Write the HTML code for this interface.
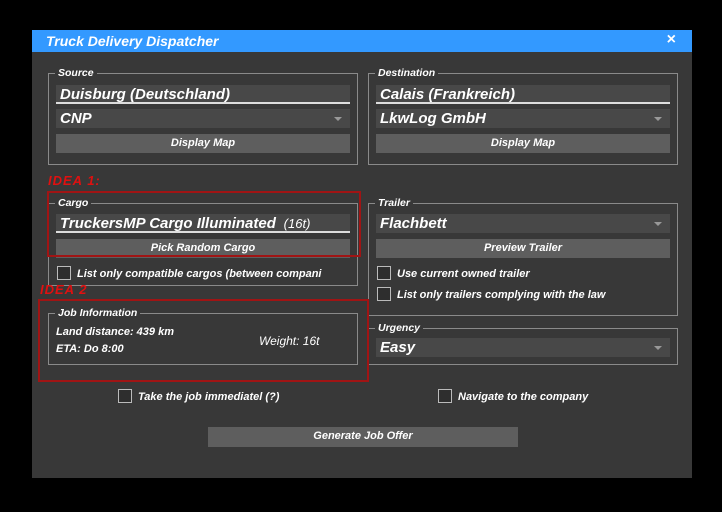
<!DOCTYPE html><html><head><style>
body{margin:0;background:#000;width:722px;height:512px;position:relative;overflow:hidden;font-family:"Liberation Sans",sans-serif;font-style:italic;font-weight:bold;color:#fff}
div{position:absolute;box-sizing:border-box}
.win{left:32px;top:30px;width:660px;height:448px;background:#383838}
.title{left:32px;top:30px;width:660px;height:22px;background:#3399ff;font-size:14px;padding:3px 0 0 14px}
.fs{border:1px solid #8a8a8a}
.lg{background:#383838;font-size:10.5px;padding:0 3px;top:-7px;left:6px;line-height:12px}
.inp{background:#484848;font-size:15px;padding:0 0 0 4px;height:19px;line-height:19px}
.ul{border-bottom:2px solid #ddd}
.btn{background:#5e5e5e;font-size:11px;text-align:center;line-height:19px;height:19px}
.arr{right:8px;top:8px;width:0;height:0;border-left:4px solid transparent;border-right:4px solid transparent;border-top:4px solid #999}
.cb{width:14px;height:14px;border:1px solid #bbb;background:#2e2e2e}
.t{font-size:11px;white-space:nowrap}
.red{border:2px solid #a01414;z-index:5}
.rt{color:#e01010;font-size:13px;letter-spacing:1px}
</style></head><body>
<div class="win"></div>
<div class="title">Truck Delivery Dispatcher<span style="position:absolute;right:16px;top:1px;font-size:16px;font-style:normal">×</span></div>

<div class="fs" style="left:48px;top:73px;width:310px;height:92px"><div class="lg">Source</div></div>
<div class="inp ul" style="left:56px;top:85px;width:294px;height:19px">Duisburg (Deutschland)</div>
<div class="inp" style="left:56px;top:109px;width:294px">CNP<div class="arr"></div></div>
<div class="btn" style="left:56px;top:134px;width:294px">Display Map</div>

<div class="fs" style="left:368px;top:73px;width:310px;height:92px"><div class="lg">Destination</div></div>
<div class="inp ul" style="left:376px;top:85px;width:294px">Calais (Frankreich)</div>
<div class="inp" style="left:376px;top:109px;width:294px">LkwLog GmbH<div class="arr"></div></div>
<div class="btn" style="left:376px;top:134px;width:294px">Display Map</div>

<div class="rt" style="left:48px;top:173px">IDEA 1:</div>
<div class="fs" style="left:48px;top:203px;width:310px;height:83px"><div class="lg">Cargo</div></div>
<div class="inp ul" style="left:56px;top:214px;width:294px">TruckersMP Cargo Illuminated <span style="font-weight:normal;font-size:13px">&nbsp;(16t)</span></div>
<div class="btn" style="left:56px;top:239px;width:294px">Pick Random Cargo</div>
<div class="cb" style="left:57px;top:266px"></div>
<div class="t" style="left:77px;top:268px">List only compatible cargos (between compani</div>
<div class="red" style="left:47px;top:191px;width:314px;height:66px"></div>

<div class="fs" style="left:368px;top:203px;width:310px;height:113px"><div class="lg">Trailer</div></div>
<div class="inp" style="left:376px;top:214px;width:294px">Flachbett<div class="arr"></div></div>
<div class="btn" style="left:376px;top:239px;width:294px">Preview Trailer</div>
<div class="cb" style="left:377px;top:266px"></div>
<div class="t" style="left:397px;top:268px">Use current owned trailer</div>
<div class="cb" style="left:377px;top:287px"></div>
<div class="t" style="left:397px;top:289px">List only trailers complying with the law</div>

<div class="rt" style="left:40px;top:282px">IDEA 2</div>
<div class="fs" style="left:48px;top:313px;width:310px;height:52px"><div class="lg">Job Information</div></div>
<div class="t" style="left:56px;top:326px">Land distance: 439 km</div>
<div class="t" style="left:56px;top:343px">ETA: Do 8:00</div>
<div class="t" style="left:259px;top:334px;font-weight:normal;font-size:12px">Weight: 16t</div>
<div class="red" style="left:38px;top:299px;width:331px;height:83px"></div>

<div class="fs" style="left:368px;top:328px;width:310px;height:37px"><div class="lg">Urgency</div></div>
<div class="inp" style="left:376px;top:338px;width:294px">Easy<div class="arr"></div></div>

<div class="cb" style="left:118px;top:389px"></div>
<div class="t" style="left:138px;top:391px">Take the job immediatel (?)</div>
<div class="cb" style="left:438px;top:389px"></div>
<div class="t" style="left:458px;top:391px">Navigate to the company</div>

<div class="btn" style="left:208px;top:427px;width:310px;height:20px">Generate Job Offer</div>
</body></html>
